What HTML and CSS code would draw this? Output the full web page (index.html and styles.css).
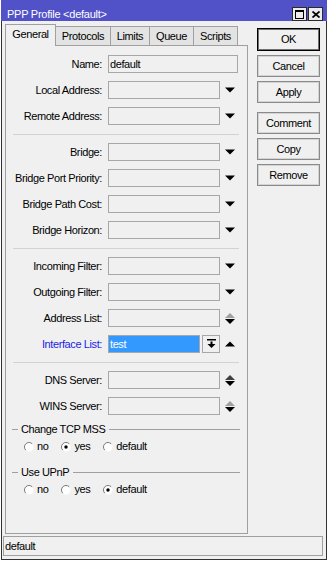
FILE: index.html
```html
<!DOCTYPE html>
<html>
<head>
<meta charset="utf-8">
<title>PPP Profile</title>
<link rel="stylesheet" href="styles.css">
</head>
<body>
<div class="window">
  <div class="titlebar">
    <span class="title">PPP Profile &lt;default&gt;</span>
    <div class="caption">
      <span class="cbtn"><svg width="9" height="9" viewBox="0 0 9 9"><rect x="0.5" y="0.5" width="8" height="8" fill="none" stroke="#000"/><rect x="0" y="0" width="9" height="2"/></svg></span>
      <span class="cbtn"><svg width="8" height="7" viewBox="0 0 8 7"><path d="M0.5 0.5L7.5 6.5M7.5 0.5L0.5 6.5" stroke="#000" stroke-width="1.7" fill="none"/></svg></span>
    </div>
  </div>
  <div class="frame">
    <div class="main">
      <div class="left">
        <div class="tabs">
          <div class="tab active">General</div>
          <div class="tab">Protocols</div>
          <div class="tab">Limits</div>
          <div class="tab">Queue</div>
          <div class="tab">Scripts</div>
        </div>
        <div class="panel">
          <div class="row"><span class="label">Name:</span><span class="field wide">default</span></div>
          <div class="row"><span class="label">Local Address:</span><span class="field"></span><span class="arr"><svg width="10" height="6" viewBox="0 0 10 6"><path d="M0 0.5H10L5 5.5Z"/></svg></span></div>
          <div class="row"><span class="label">Remote Address:</span><span class="field"></span><span class="arr"><svg width="10" height="6" viewBox="0 0 10 6"><path d="M0 0.5H10L5 5.5Z"/></svg></span></div>
          <div class="sep"></div>
          <div class="row"><span class="label">Bridge:</span><span class="field"></span><span class="arr"><svg width="10" height="6" viewBox="0 0 10 6"><path d="M0 0.5H10L5 5.5Z"/></svg></span></div>
          <div class="row"><span class="label">Bridge Port Priority:</span><span class="field"></span><span class="arr"><svg width="10" height="6" viewBox="0 0 10 6"><path d="M0 0.5H10L5 5.5Z"/></svg></span></div>
          <div class="row"><span class="label">Bridge Path Cost:</span><span class="field"></span><span class="arr"><svg width="10" height="6" viewBox="0 0 10 6"><path d="M0 0.5H10L5 5.5Z"/></svg></span></div>
          <div class="row"><span class="label">Bridge Horizon:</span><span class="field"></span><span class="arr"><svg width="10" height="6" viewBox="0 0 10 6"><path d="M0 0.5H10L5 5.5Z"/></svg></span></div>
          <div class="sep"></div>
          <div class="row"><span class="label">Incoming Filter:</span><span class="field"></span><span class="arr"><svg width="10" height="6" viewBox="0 0 10 6"><path d="M0 0.5H10L5 5.5Z"/></svg></span></div>
          <div class="row"><span class="label">Outgoing Filter:</span><span class="field"></span><span class="arr"><svg width="10" height="6" viewBox="0 0 10 6"><path d="M0 0.5H10L5 5.5Z"/></svg></span></div>
          <div class="row"><span class="label">Address List:</span><span class="field"></span><span class="arr"><svg width="10" height="11" viewBox="0 0 10 11"><path d="M5 0L10 5H0Z" fill="#a0a0a0"/><path d="M0 6H10L5 11Z"/></svg></span></div>
          <div class="row"><span class="label blue">Interface List:</span><span class="field sel">test</span><span class="mini"><svg width="9" height="10" viewBox="0 0 9 10"><rect x="0" y="0" width="9" height="1.5"/><rect x="3.5" y="2.5" width="2" height="3"/><path d="M0.5 5H8.5L4.5 9Z"/></svg></span><span class="arr"><svg width="10" height="6" viewBox="0 0 10 6"><path d="M5 0.5L10 5.5H0Z"/></svg></span></div>
          <div class="sep"></div>
          <div class="row"><span class="label">DNS Server:</span><span class="field"></span><span class="arr"><svg width="10" height="11" viewBox="0 0 10 11"><path d="M5 0L10 5H0Z" fill="#404040"/><path d="M0 6H10L5 11Z"/></svg></span></div>
          <div class="row"><span class="label">WINS Server:</span><span class="field"></span><span class="arr"><svg width="10" height="11" viewBox="0 0 10 11"><path d="M5 0L10 5H0Z" fill="#a0a0a0"/><path d="M0 6H10L5 11Z"/></svg></span></div>
          <div class="boxes">
            <div class="box">
              <div class="box-head"><span>Change TCP MSS</span></div>
              <div class="radios">
                <span class="radio"><svg width="10" height="10" viewBox="0 0 10 10"><circle cx="5" cy="5" r="4.5" fill="#fff"/><path d="M8.2 1.8A4.5 4.5 0 0 0 1.8 8.2" stroke="#7a7a7a" fill="none"/></svg>no</span>
                <span class="radio"><svg width="10" height="10" viewBox="0 0 10 10"><circle cx="5" cy="5" r="4.5" fill="#fff"/><path d="M8.2 1.8A4.5 4.5 0 0 0 1.8 8.2" stroke="#7a7a7a" fill="none"/><circle cx="5" cy="5" r="1.7" fill="#000"/></svg>yes</span>
                <span class="radio"><svg width="10" height="10" viewBox="0 0 10 10"><circle cx="5" cy="5" r="4.5" fill="#fff"/><path d="M8.2 1.8A4.5 4.5 0 0 0 1.8 8.2" stroke="#7a7a7a" fill="none"/></svg>default</span>
              </div>
            </div>
            <div class="box">
              <div class="box-head"><span>Use UPnP</span></div>
              <div class="radios">
                <span class="radio"><svg width="10" height="10" viewBox="0 0 10 10"><circle cx="5" cy="5" r="4.5" fill="#fff"/><path d="M8.2 1.8A4.5 4.5 0 0 0 1.8 8.2" stroke="#7a7a7a" fill="none"/></svg>no</span>
                <span class="radio"><svg width="10" height="10" viewBox="0 0 10 10"><circle cx="5" cy="5" r="4.5" fill="#fff"/><path d="M8.2 1.8A4.5 4.5 0 0 0 1.8 8.2" stroke="#7a7a7a" fill="none"/></svg>yes</span>
                <span class="radio"><svg width="10" height="10" viewBox="0 0 10 10"><circle cx="5" cy="5" r="4.5" fill="#fff"/><path d="M8.2 1.8A4.5 4.5 0 0 0 1.8 8.2" stroke="#7a7a7a" fill="none"/><circle cx="5" cy="5" r="1.7" fill="#000"/></svg>default</span>
              </div>
            </div>
          </div>
        </div>
      </div>
      <div class="buttons">
        <div class="btn default">OK</div>
        <div class="btn">Cancel</div>
        <div class="btn">Apply</div>
        <div class="btn spaced">Comment</div>
        <div class="btn">Copy</div>
        <div class="btn">Remove</div>
      </div>
    </div>
    <div class="status">default</div>
  </div>
</div>
</body>
</html>
```

FILE: styles.css
```css
* { box-sizing: border-box; }
html, body { margin: 0; padding: 0; }
body {
  background: #ffffff;
  width: 329px;
  height: 561px;
  overflow: hidden;
  font-family: "Liberation Sans", Arial, sans-serif;
  font-size: 11px;
  letter-spacing: -0.4px;
  color: #000;
}
.window {
  margin-left: 1px;
  width: 326px;
  height: 560px;
  display: flex;
  flex-direction: column;
  background: #f0f0f0;
}
.titlebar {
  height: 21px;
  flex: none;
  background: #5151c8;
  display: flex;
  align-items: flex-start;
  justify-content: space-between;
  padding: 0 4px 0 6px;
}
.title {
  color: #fff;
  line-height: 13px;
  margin-top: 8px;
  letter-spacing: -0.25px;
  white-space: nowrap;
}
.caption {
  display: flex;
  gap: 1px;
  margin-top: 7px;
}
.cbtn {
  width: 15px;
  height: 14px;
  background: #ececec;
  border: 1px solid #2a2a2a;
  display: flex;
  align-items: center;
  justify-content: center;
}
.frame {
  flex: 1;
  display: flex;
  flex-direction: column;
  border: 1px solid #333;
  border-top: none;
}
.main {
  display: flex;
  gap: 9px;
  padding: 3px 0 0 3px;
}
.left {
  width: 243px;
  display: flex;
  flex-direction: column;
}
.tabs {
  display: flex;
  align-items: flex-end;
  height: 22px;
}
.tab {
  flex: none;
  height: 20px;
  border: 1px solid #a0a0a0;
  margin-right: -1px;
  background: #e3e3e3;
  text-align: center;
  line-height: 18px;
  white-space: nowrap;
}
.tab.active {
  height: 22px;
  border-bottom: none;
  background: #f0f0f0;
  line-height: 19px;
}
.tab:nth-child(1) { width: 51px; }
.tab:nth-child(2) { width: 56px; }
.tab:nth-child(3) { width: 40px; }
.tab:nth-child(4) { width: 45px; }
.tab:nth-child(5) { width: 45px; }
.tabs::after {
  content: "";
  flex: 1;
  height: 1px;
  background: #a0a0a0;
}
.panel {
  height: 488px;
  border: 1px solid #a0a0a0;
  border-top: none;
  padding-top: 9px;
  display: flex;
  flex-direction: column;
  gap: 8px;
}
.row {
  display: flex;
  align-items: center;
  height: 18px;
}
.label {
  width: 96px;
  margin-right: 6px;
  text-align: right;
  line-height: 18px;
  white-space: nowrap;
}
.label.blue { color: #1c1ce6; }
.field {
  width: 112px;
  height: 18px;
  border: 1px solid #a7a7a7;
  background: #f0f0f0;
  padding-left: 1px;
  line-height: 16px;
}
.field.wide { width: 130px; }
.field.sel {
  width: 92px;
  background: #3399ff;
  color: #fff;
  margin-right: 2px;
}
.mini {
  width: 18px;
  height: 18px;
  border: 1px solid #a7a7a7;
  display: flex;
  align-items: center;
  justify-content: center;
}
.arr {
  width: 20px;
  display: flex;
  align-items: center;
  justify-content: center;
}
svg { display: block; }
.sep {
  height: 1px;
  background: #d2d2d2;
  margin: 1px 8px 0 7px;
}
.boxes {
  display: flex;
  flex-direction: column;
  gap: 13px;
  margin: 0 7px 0 6px;
}
.box {
  display: flex;
  flex-direction: column;
  gap: 4px;
}
.box-head {
  display: flex;
  align-items: center;
  height: 13px;
  line-height: 13px;
}
.box-head::before {
  content: "";
  width: 6px;
  height: 1px;
  background: #a0a0a0;
}
.box-head::after {
  content: "";
  flex: 1;
  height: 1px;
  background: #a0a0a0;
}
.box-head span {
  padding: 0 4px 0 3px;
  white-space: nowrap;
}
.radios {
  display: flex;
  gap: 13px;
  height: 13px;
  padding-left: 12px;
  align-items: center;
}
.radio {
  display: flex;
  align-items: center;
  gap: 3px;
  line-height: 13px;
}
.buttons {
  width: 63px;
  display: flex;
  flex-direction: column;
  gap: 4px;
  padding-top: 4px;
}
.btn {
  height: 22px;
  border: 1px solid #8a8a8a;
  box-shadow: inset 0 0 0 1px #d4d4d4;
  background: #f0f0f0;
  text-align: center;
  line-height: 20px;
}
.btn.default {
  height: 23px;
  border: 1px solid #000;
  box-shadow: inset 0 0 0 1px #707070;
}
.btn.spaced { margin-top: 5px; }
.status {
  margin: 2px 3px 3px 1px;
  height: 20px;
  border: 1px solid #a0a0a0;
  padding-left: 1px;
  line-height: 18px;
}
```
